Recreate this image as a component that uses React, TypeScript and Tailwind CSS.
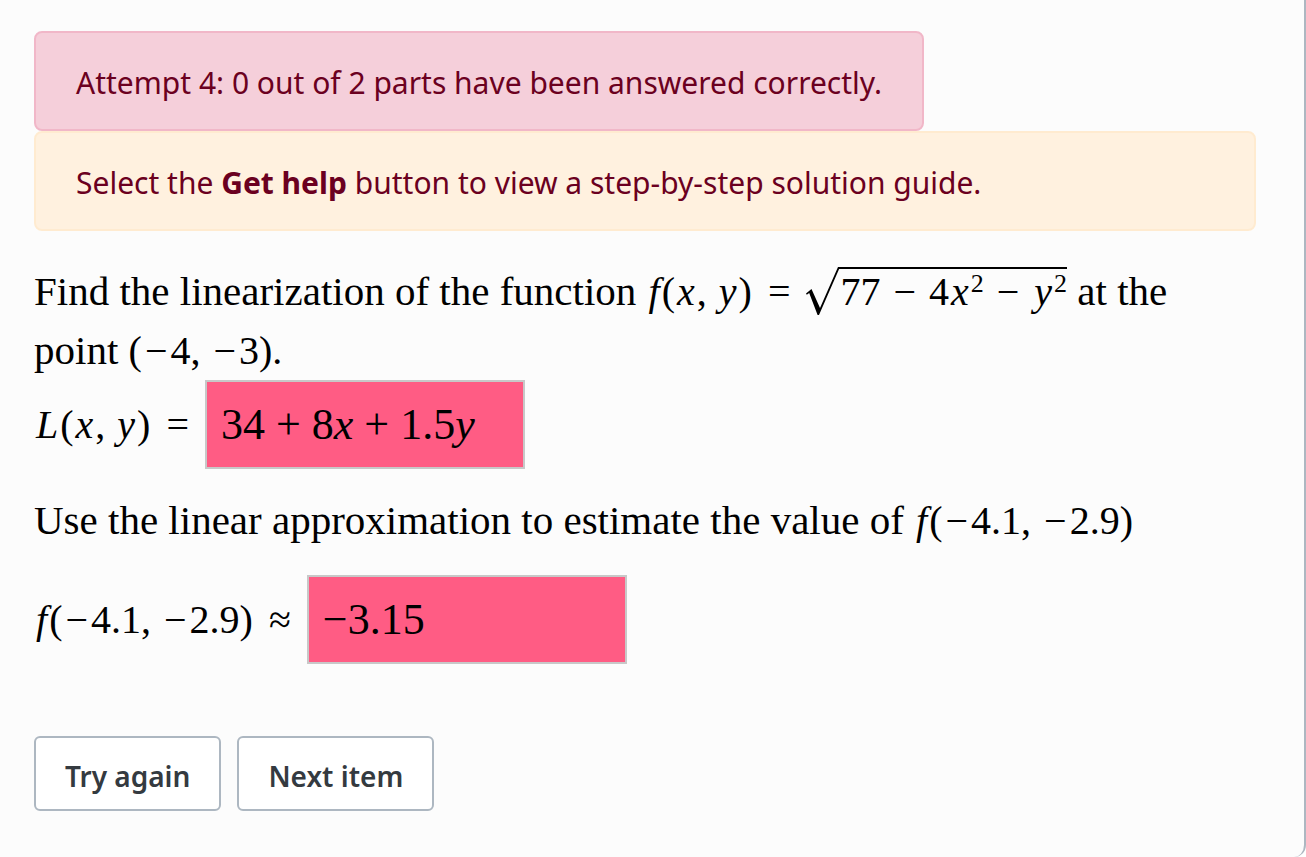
import { useState } from "react";
import type { ReactNode } from "react";

function Var({ children }: { children: ReactNode }) {
  return <i className="px-0.5">{children}</i>;
}

function Tex({ children }: { children: ReactNode }) {
  return (
    <span className="whitespace-nowrap font-['Liberation_Serif',serif] text-[40px]">{children}</span>
  );
}

function Relation({ children }: { children: ReactNode }) {
  return <span className="mx-4">{children}</span>;
}

function Minus() {
  return <span className="mx-[3px]">−</span>;
}

function Sqrt({ children }: { children: ReactNode }) {
  return (
    <span className="inline-flex items-end">
      <svg className="h-[48px] w-[34px] shrink-0" viewBox="0 0 34 48" aria-hidden>
        <path d="M0 26.5 5.5 22 14 41 32 0H34V2H33.1L13 48H11.6L3.2 26 .8 27.8Z" fill="currentColor" />
      </svg>
      <span className="self-baseline border-t-2 border-black leading-[46px]">{children}</span>
    </span>
  );
}

// Digits stay upright, variable names go italic
function typeset(value: string) {
  return value
    .split(/([a-z])/)
    .map((part, i) => (/^[a-z]$/.test(part) ? <i key={i}>{part}</i> : part));
}

function AnswerField({ id, initial }: { id: string; initial: string }) {
  const [value, setValue] = useState(initial);

  return (
    <span className="relative inline-block w-80 max-w-full font-['Liberation_Serif',serif] text-[44px]">
      <input
        id={id}
        type="text"
        value={value}
        onChange={(e) => setValue(e.target.value)}
        className="block h-[89px] w-full border-2 border-[#c8c8c8] bg-[#ff5c84] px-3.5 text-transparent caret-black outline-none"
      />
      <span
        className="pointer-events-none absolute inset-0 flex items-center overflow-hidden whitespace-pre px-4 text-black"
        aria-hidden
      >
        <span>{typeset(value)}</span>
      </span>
    </span>
  );
}

export default function App() {
  const alertClass = "rounded-lg border-2 px-10 pt-[26px] pb-[22px]";
  const buttonClass =
    "h-[75px] rounded-md border-2 border-[#adb7c1] bg-white px-[29px] pt-1 text-[28px] font-semibold text-[#343a40]";

  return (
    <main className="min-h-screen rounded-br-xl border-r-2 border-[#adb7c1] bg-[#fcfcfc] pt-[31px] pr-12 pb-11 pl-[34px] font-['Noto_Sans',sans-serif] text-black">
      {/* Feedback */}
      <div className="flex flex-col items-start text-[30px] leading-[48px] text-[#6b0020]">
        <div className={`${alertClass} border-[#f1b7c8] bg-[#f5cfda]`} role="alert">
          Attempt 4: 0 out of 2 parts have been answered correctly.
        </div>
        <div className={`${alertClass} w-full border-[#ffebd0] bg-[#fff1df]`} role="alert">
          Select the <strong>Get help</strong> button to view a step-by-step solution guide.
        </div>
      </div>

      {/* Question */}
      <div className="mt-[31px] font-['Liberation_Serif',serif] text-[41px] leading-[59px]">
        <p>
          Find the linearization of the function{" "}
          <Tex>
            <Var>f</Var>(<Var>x</Var>, <Var>y</Var>)<Relation>=</Relation>
            <Sqrt>
              77 <Minus /> 4<Var>x</Var>
              <sup className="text-[26px]">2</sup> <Minus /> <Var>y</Var>
              <sup className="text-[26px]">2</sup>
            </Sqrt>
          </Tex>{" "}
          at the{" "}
          <span className="whitespace-nowrap">
            point{" "}
            <Tex>
              (<Minus />
              4, <Minus />
              3).
            </Tex>
          </span>
        </p>
        <div className="flex flex-wrap items-center">
          <label htmlFor="linearization">
            <Tex>
              <Var>L</Var>(<Var>x</Var>, <Var>y</Var>)<Relation>=</Relation>
            </Tex>
          </label>
          <AnswerField id="linearization" initial="34 + 8x + 1.5y" />
        </div>
        <p className="mt-[22px]">
          Use the linear approximation to estimate the value of{" "}
          <Tex>
            <Var>f</Var>(<Minus />
            4.1, <Minus />
            2.9)
          </Tex>
        </p>
        <div className="mt-[25px] flex flex-wrap items-center">
          <label htmlFor="estimate">
            <Tex>
              <Var>f</Var>(<Minus />
              4.1, <Minus />
              2.9)<Relation>≈</Relation>
            </Tex>
          </label>
          <AnswerField id="estimate" initial="−3.15" />
        </div>
      </div>

      {/* Actions */}
      <div className="mt-[72px] flex flex-wrap gap-4">
        <button type="button" className={buttonClass}>
          Try again
        </button>
        <button type="button" className={buttonClass}>
          Next item
        </button>
      </div>
    </main>
  );
}
